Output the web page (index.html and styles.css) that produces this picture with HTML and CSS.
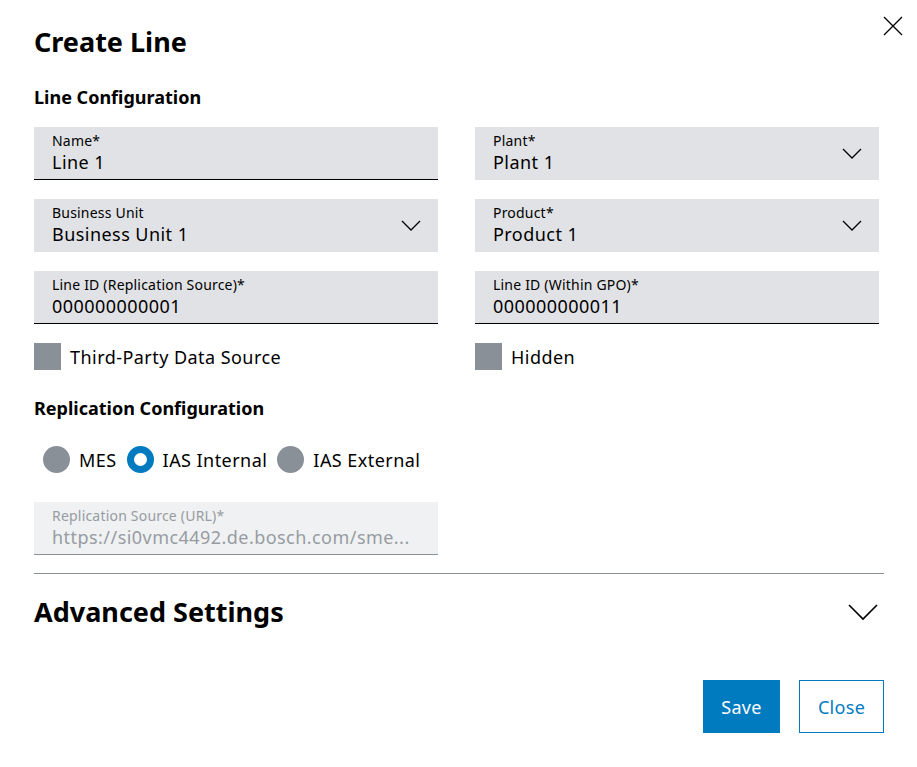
FILE: index.html
```html
<!DOCTYPE html>
<html lang="en">
<head>
    <meta charset="UTF-8">
    <meta name="viewport" content="width=device-width, initial-scale=1.0">
    <title>Create Line</title>
    <link rel="stylesheet" href="styles.css">
</head>
<body>
    <div class="dialog">
        <button class="close-x" aria-label="Close">
            <svg width="20" height="20" viewBox="0 0 20 20"><path d="M1 1 L19 19 M19 1 L1 19" stroke="#000" stroke-width="1.3" fill="none"/></svg>
        </button>

        <h1>Create Line</h1>

        <h2>Line Configuration</h2>
        <div class="grid">
            <div class="field">
                <label>Name*</label>
                <div class="value">Line 1</div>
            </div>
            <div class="field select">
                <label>Plant*</label>
                <div class="value">Plant 1</div>
                <svg class="chev" width="20" height="12" viewBox="0 0 20 12"><path d="M1 1 L10 10 L19 1" stroke="#000" stroke-width="1.3" fill="none"/></svg>
            </div>
            <div class="field select">
                <label>Business Unit</label>
                <div class="value">Business Unit 1</div>
                <svg class="chev" width="20" height="12" viewBox="0 0 20 12"><path d="M1 1 L10 10 L19 1" stroke="#000" stroke-width="1.3" fill="none"/></svg>
            </div>
            <div class="field select">
                <label>Product*</label>
                <div class="value">Product 1</div>
                <svg class="chev" width="20" height="12" viewBox="0 0 20 12"><path d="M1 1 L10 10 L19 1" stroke="#000" stroke-width="1.3" fill="none"/></svg>
            </div>
            <div class="field">
                <label>Line ID (Replication Source)*</label>
                <div class="value">000000000001</div>
            </div>
            <div class="field">
                <label>Line ID (Within GPO)*</label>
                <div class="value">000000000011</div>
            </div>
            <div class="check"><span class="box"></span>Third-Party Data Source</div>
            <div class="check"><span class="box"></span>Hidden</div>
        </div>

        <h2 class="sub">Replication Configuration</h2>
        <div class="radios">
            <div class="radio"><span class="dot"></span>MES</div>
            <div class="radio"><span class="dot on"></span>IAS Internal</div>
            <div class="radio"><span class="dot"></span>IAS External</div>
        </div>

        <div class="field disabled">
            <label>Replication Source (URL)*</label>
            <div class="value">https://si0vmc4492.de.bosch.com/sme...</div>
        </div>

        <div class="advanced">
            <h3>Advanced Settings</h3>
            <svg width="30" height="18" viewBox="0 0 30 18"><path d="M1 2 L15 16 L29 2" stroke="#000" stroke-width="1.6" fill="none"/></svg>
        </div>

        <div class="actions">
            <button class="btn primary">Save</button>
            <button class="btn secondary">Close</button>
        </div>
    </div>
</body>
</html>
```

FILE: styles.css
```css
body, html {
    margin: 0;
    background-color: white;
    font-family: "Noto Sans", Arial, sans-serif;
    color: #000;
}

.dialog {
    position: relative;
    padding: 26px 33px 0 34px;
}

.close-x {
    position: absolute;
    top: 16px;
    right: 14px;
    background: none;
    border: none;
    padding: 0;
    cursor: pointer;
}

h1 {
    font-size: 27px;
    font-weight: 700;
    margin: 0;
    line-height: 32px;
}

h2 {
    font-size: 18px;
    font-weight: 700;
    margin: 27px 0 18px;
    line-height: 24px;
}

h2.sub {
    margin: 26px 0 0;
}

.grid {
    display: grid;
    grid-template-columns: 404px 404px;
    column-gap: 37px;
    row-gap: 19px;
}

.field {
    position: relative;
    background-color: #e0e2e5;
    border-bottom: 1px solid #000;
    height: 52px;
    padding: 0 18px;
    box-sizing: content-box;
}

.field.select {
    border-bottom: none;
    height: 53px;
}

.field label {
    display: block;
    font-size: 14px;
    letter-spacing: 0.2px;
    line-height: 18px;
    padding-top: 5px;
    color: #000;
}

.field .value {
    font-size: 18px;
    letter-spacing: 0.45px;
    line-height: 24px;
    margin-top: 0;
}

.chev {
    position: absolute;
    right: 17px;
    top: 21px;
}

.check {
    display: flex;
    align-items: center;
    gap: 9px;
    font-size: 18px;
    letter-spacing: 0.45px;
    margin-top: 0;
}

.box {
    width: 27px;
    height: 27px;
    background-color: #8a9097;
}

.radios {
    display: flex;
    align-items: center;
    gap: 10px;
    padding: 26px 0 0 9px;
}

.radio {
    display: flex;
    align-items: center;
    gap: 9px;
    font-size: 18px;
    letter-spacing: 0.45px;
}

.dot {
    width: 27px;
    height: 27px;
    border-radius: 50%;
    background-color: #8a9097;
    box-sizing: border-box;
}

.dot.on {
    background-color: white;
    border: 7px solid #007bc0;
}

.field.disabled {
    width: 368px;
    margin-top: 29px;
    background-color: #eff1f2;
    border-bottom-color: #8a9097;
}

.field.disabled label,
.field.disabled .value {
    color: #979ca2;
}

.advanced {
    margin-top: 18px;
    border-top: 1px solid #8a9097;
    display: flex;
    justify-content: space-between;
    align-items: center;
    padding: 22px 6px 0 0;
}

h3 {
    font-size: 27px;
    font-weight: 700;
    margin: 0;
    line-height: 32px;
}

.actions {
    display: flex;
    justify-content: flex-end;
    gap: 19px;
    margin-top: 52px;
}

.btn {
    height: 53px;
    font-size: 18px;
    letter-spacing: 0.3px;
    font-family: inherit;
    cursor: pointer;
}

.btn.primary {
    width: 77px;
    background-color: #007bc0;
    color: white;
    border: none;
}

.btn.secondary {
    width: 85px;
    background-color: white;
    color: #007bc0;
    border: 1px solid #007bc0;
}
```
